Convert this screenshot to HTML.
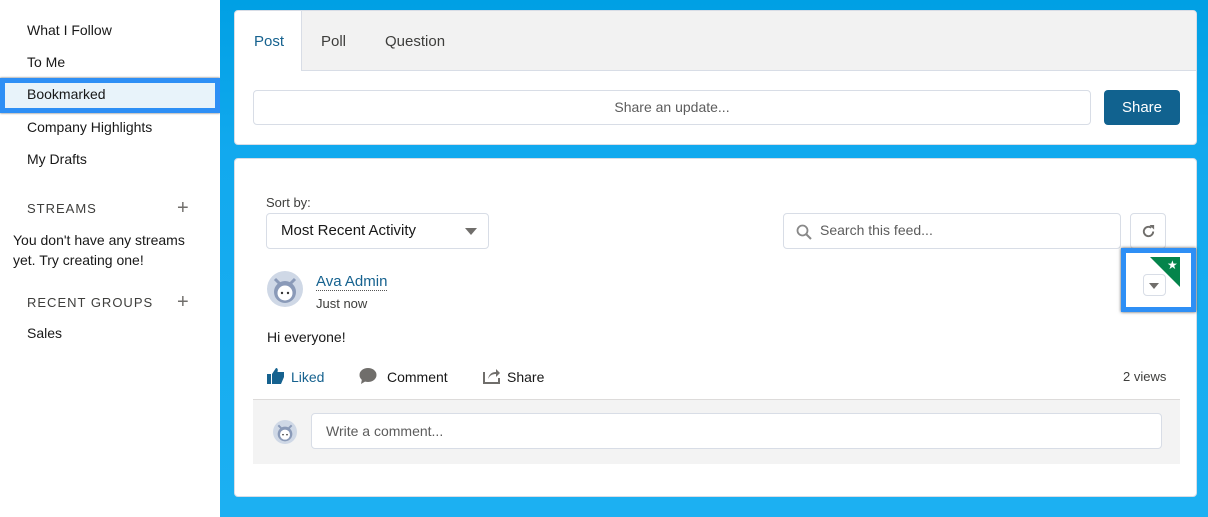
<!DOCTYPE html>
<html><head><style>
*{box-sizing:border-box;margin:0;padding:0}
body{width:1208px;height:517px;overflow:hidden;font-family:"Liberation Sans",sans-serif;font-size:14px;color:#181818;position:relative;background:#fff}
.abs{position:absolute}
.side{left:0;top:0;width:220px;height:517px;background:#fff}
.si{position:absolute;left:27px;font-size:14px;white-space:nowrap}
.main{left:220px;top:0;width:988px;height:517px;background:linear-gradient(#00a0e4,#12a9ee 30%,#1cb0f2)}
.card{position:absolute;background:#fff;border-radius:4px;border:1px solid #d8dde6}
.hd{font-size:13px;letter-spacing:1px;color:#3e3e3c}
.plus{position:absolute;left:177px;font-size:20px;color:#706e6b;font-weight:300}
.box{position:absolute;border:1px solid #d8dde6;border-radius:4px;background:#fff}
</style></head><body>
<div class="abs side">
<div class="si" style="top:22px">What I Follow</div>
<div class="si" style="top:54px">To Me</div>
<div class="abs" style="left:0;top:78px;width:220px;height:35px;border:5px solid #2e8ff5;background:#e8f3fa;box-shadow:0 0 2px #555"></div>
<div class="si" style="top:86px">Bookmarked</div>
<div class="si" style="top:119px">Company Highlights</div>
<div class="si" style="top:151px">My Drafts</div>
<div class="si hd" style="top:201px">STREAMS</div><div class="plus" style="top:197px">+</div>
<div class="abs" style="left:13px;top:230px;line-height:20px;width:185px">You don't have any streams yet. Try creating one!</div>
<div class="si hd" style="top:295px">RECENT GROUPS</div><div class="plus" style="top:291px">+</div>
<div class="si" style="top:325px">Sales</div>
</div>
<div class="abs main"></div>
<div class="card" style="left:234px;top:10px;width:963px;height:135px;overflow:hidden">
<div class="abs" style="left:66px;top:0;right:0;height:60px;background:#f2f2f2;border-bottom:1px solid #d8dde6;border-left:1px solid #d8dde6"></div>
<div class="abs" style="left:19px;top:22px;color:#16628f;font-size:15px">Post</div>
<div class="abs" style="left:86px;top:22px;font-size:15px;color:#3e3e3c">Poll</div>
<div class="abs" style="left:150px;top:22px;font-size:15px;color:#3e3e3c">Question</div>
<div class="box" style="left:18px;top:79px;width:838px;height:35px;text-align:center;line-height:33px;color:#5c5c5c">Share an update...</div>
<div class="abs" style="left:869px;top:79px;width:76px;height:35px;background:#11628f;border-radius:4px;color:#fff;text-align:center;line-height:35px;font-size:15px">Share</div>
</div>
<div class="card" style="left:234px;top:158px;width:963px;height:339px">
<div class="abs" style="left:31px;top:36px;font-size:13px;color:#3e3e3c">Sort by:</div>
<div class="box" style="left:31px;top:54px;width:223px;height:36px;padding:8px 14px;font-size:15px">Most Recent Activity<span class="abs" style="right:11px;top:14px;border:6px solid transparent;border-top:7px solid #706e6b;border-bottom:0"></span></div>
<div class="box" style="left:548px;top:54px;width:338px;height:36px;padding:8px 0 0 36px;font-size:14px;color:#5c5c5c">Search this feed...
<svg class="abs" style="left:12px;top:10px" width="16" height="16" viewBox="0 0 16 16"><circle cx="6.5" cy="6.5" r="5" fill="none" stroke="#888" stroke-width="1.8"/><path d="M10 10l5 5" stroke="#888" stroke-width="2"/></svg></div>
<div class="box" style="left:895px;top:54px;width:36px;height:36px"><svg class="abs" style="left:10px;top:10px" width="15" height="15" viewBox="0 0 16 16"><path d="M13 8a5 5 0 1 1-2-4" fill="none" stroke="#706e6b" stroke-width="2"/><path d="M9 1h5v5z" fill="#706e6b"/></svg></div>
<div class="abs" style="left:886px;top:89px;width:75px;height:64px;border:5px solid #2e8ff5;box-shadow:0 0 3px #555;background:#fff"></div>
<div class="abs" style="left:915px;top:98px;width:0;height:0;border-top:30px solid #04844b;border-left:30px solid transparent"></div>
<div class="abs" style="left:932px;top:99px;color:#fff;font-size:12px">★</div>
<div class="box" style="left:908px;top:115px;width:23px;height:22px"><span class="abs" style="left:5px;top:8px;border:5px solid transparent;border-top:6px solid #706e6b;border-bottom:0"></span></div>
<svg class="abs" style="left:32px;top:112px" width="36" height="36" viewBox="0 0 36 36"><circle cx="18" cy="18" r="18" fill="#cfd8e6"/><path d="M8 8l5 5M28 8l-5 5" stroke="#8a9ab8" stroke-width="3"/><circle cx="18" cy="21" r="11" fill="#8a9ab8"/><circle cx="18" cy="22" r="7.5" fill="#fff"/><circle cx="15" cy="22" r="1.2" fill="#333"/><circle cx="21" cy="22" r="1.2" fill="#333"/></svg>
<div class="abs" style="left:81px;top:114px;color:#16628f;font-size:15px;border-bottom:1px dotted #555">Ava Admin</div>
<div class="abs" style="left:81px;top:137px;font-size:13px;color:#3e3e3c">Just now</div>
<div class="abs" style="left:32px;top:170px">Hi everyone!</div>
<svg class="abs" style="left:32px;top:209px" width="18" height="16" viewBox="0 0 18 16"><rect x="0" y="6" width="4" height="10" fill="#16628f"/><path d="M5 6l4-6c2 0 2 2 1.5 4H17v5l-3 7H5z" fill="#16628f"/></svg>
<div class="abs" style="left:56px;top:210px;color:#16628f">Liked</div>
<svg class="abs" style="left:124px;top:209px" width="18" height="16" viewBox="0 0 18 16"><ellipse cx="9" cy="7" rx="8.5" ry="7" fill="#706e6b"/><path d="M3 11l-1 5 5-3z" fill="#706e6b"/></svg>
<div class="abs" style="left:152px;top:210px">Comment</div>
<svg class="abs" style="left:248px;top:207px" width="18" height="18" viewBox="0 0 18 18"><path d="M1 6v11h15v-5" fill="none" stroke="#706e6b" stroke-width="2"/><path d="M5 13c1-5 4-7 8-7V3l4 4-4 4V8c-3 0-6 1-8 5z" fill="#706e6b"/></svg>
<div class="abs" style="left:272px;top:210px">Share</div>
<div class="abs" style="left:888px;top:210px;font-size:13px;color:#3e3e3c">2 views</div>
<div class="abs" style="left:18px;top:240px;width:927px;height:65px;background:#f3f3f3;border-top:1px solid #dddbda"></div>
<svg class="abs" style="left:38px;top:261px" width="24" height="24" viewBox="0 0 36 36"><circle cx="18" cy="18" r="18" fill="#cfd8e6"/><path d="M8 8l5 5M28 8l-5 5" stroke="#8a9ab8" stroke-width="3"/><circle cx="18" cy="21" r="11" fill="#8a9ab8"/><circle cx="18" cy="22" r="7.5" fill="#fff"/><circle cx="15" cy="22" r="1.2" fill="#333"/><circle cx="21" cy="22" r="1.2" fill="#333"/></svg>
<div class="box" style="left:76px;top:254px;width:851px;height:36px;padding:9px 14px;color:#5c5c5c">Write a comment...</div>
</div>
</body></html>
